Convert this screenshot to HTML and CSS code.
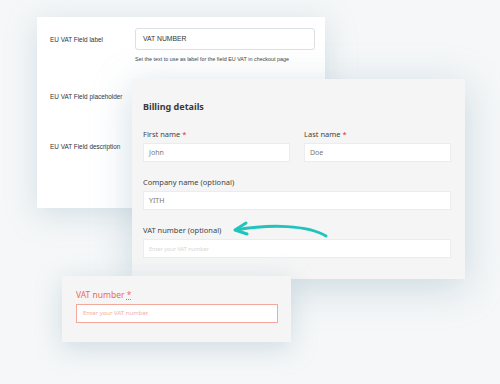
FILE: index.html
```html
<!DOCTYPE html>
<html lang="en">
<head>
  <meta charset="UTF-8" />
  <meta name="viewport" content="width=device-width, initial-scale=1.0" />
  <title>EU VAT Field</title>
  <link rel="stylesheet" href="styles.css">
</head>
<body>

  <div class="scene">

    <!-- admin settings panel -->
    <div class="settings-card">
      <div class="settings-row">
        <span class="settings-label">EU VAT Field label</span>
        <div class="settings-field">
          <div class="settings-input">VAT NUMBER</div>
          <p class="settings-help">Set the text to use as label for the field EU VAT in checkout page</p>
        </div>
      </div>
      <div class="settings-row">
        <span class="settings-label">EU VAT Field placeholder</span>
      </div>
      <div class="settings-row">
        <span class="settings-label">EU VAT Field description</span>
      </div>
    </div>

    <!-- checkout billing form -->
    <div class="billing-card">
      <h2>Billing details</h2>
      <div class="billing-grid">
        <div class="field">
          <label>First name <span class="req">*</span></label>
          <div class="input">John</div>
        </div>
        <div class="field">
          <label>Last name <span class="req">*</span></label>
          <div class="input">Doe</div>
        </div>
        <div class="field wide">
          <label>Company name (optional)</label>
          <div class="input">YITH</div>
        </div>
        <div class="field wide">
          <label>VAT number (optional)</label>
          <div class="input placeholder">Enter your VAT number</div>
        </div>
      </div>
    </div>

    <svg class="arrow" width="110" height="24" viewBox="0 0 110 24">
      <path d="M96 15 C 78 4, 40 3, 6 9" fill="none" stroke="#20c4bd" stroke-width="3" stroke-linecap="round"/>
      <path d="M16 2 L 5 9 L 17 13" fill="none" stroke="#20c4bd" stroke-width="3" stroke-linecap="round" stroke-linejoin="round"/>
    </svg>

    <!-- error state -->
    <div class="error-card">
      <label class="error-label">VAT number <span class="req-dot">*</span></label>
      <div class="error-input">Enter your VAT number</div>
    </div>

  </div>

</body>
</html>
```

FILE: styles.css
```css
body {
  margin: 0;
  background: #f5f7f8;
  font-family: "Liberation Sans", Arial, sans-serif;
}

.scene {
  position: relative;
  width: 500px;
  height: 384px;
  overflow: hidden;
}

/* settings card */

.settings-card {
  position: absolute;
  left: 37px;
  top: 17px;
  width: 288px;
  height: 191px;
  box-sizing: border-box;
  padding: 11px 10px 0 13px;
  background: #ffffff;
  box-shadow: 0 6px 28px rgba(150, 180, 195, 0.35);
}

.settings-row {
  display: flex;
  align-items: flex-start;
  min-height: 50px;
}

.settings-row:first-child {
  min-height: 57px;
}

.settings-label {
  width: 85px;
  padding-top: 8px;
  font-size: 6.4px;
  color: #333;
}

.settings-field {
  flex: 1;
}

.settings-input {
  height: 22px;
  box-sizing: border-box;
  padding: 0 7px;
  line-height: 20px;
  border: 1px solid #dde0e3;
  border-radius: 3px;
  font-size: 6.8px;
  color: #333;
}

.settings-help {
  margin: 6px 0 0;
  font-size: 5.4px;
  color: #444;
}

/* billing card */

.billing-card {
  position: absolute;
  left: 132px;
  top: 79px;
  width: 333px;
  height: 200px;
  box-sizing: border-box;
  padding: 21px 14px 0 11px;
  background: #f5f5f5;
  box-shadow: 0 8px 36px rgba(150, 180, 195, 0.45);
  font-family: "Noto Sans", sans-serif;
}

.billing-card h2 {
  margin: 0 0 16px;
  font-size: 9px;
  font-weight: 700;
  color: #3a3a3a;
}

.billing-grid {
  display: grid;
  grid-template-columns: 1fr 1fr;
  column-gap: 14px;
  row-gap: 15px;
}

.field.wide {
  grid-column: 1 / 3;
}

.field label {
  display: block;
  margin-bottom: 4px;
  font-size: 7.5px;
  color: #444;
}

.req {
  color: #e52d2d;
}

.input {
  height: 19px;
  box-sizing: border-box;
  padding: 0 5px;
  line-height: 18px;
  background: #ffffff;
  border: 1px solid #ececec;
  font-size: 7px;
  color: #777;
}

.input.placeholder {
  color: #d6d6d6;
  font-size: 5.5px;
}

.arrow {
  position: absolute;
  left: 230px;
  top: 221px;
}

/* error card */

.error-card {
  position: absolute;
  left: 62px;
  top: 276px;
  width: 229px;
  height: 66px;
  box-sizing: border-box;
  padding: 13px 13px 0 14px;
  background: #f5f5f5;
  box-shadow: 0 6px 26px rgba(150, 180, 195, 0.4);
  font-family: "Noto Sans", sans-serif;
}

.error-label {
  display: block;
  margin-bottom: 4px;
  font-size: 8.5px;
  color: #ee6a55;
}

.req-dot {
  color: #ee6a55;
  text-decoration: underline dotted;
}

.error-input {
  height: 19px;
  box-sizing: border-box;
  padding: 0 6px;
  line-height: 17px;
  background: #ffffff;
  border: 1.5px solid #f4a89c;
  font-size: 6px;
  color: #f3aea3;
}
```
